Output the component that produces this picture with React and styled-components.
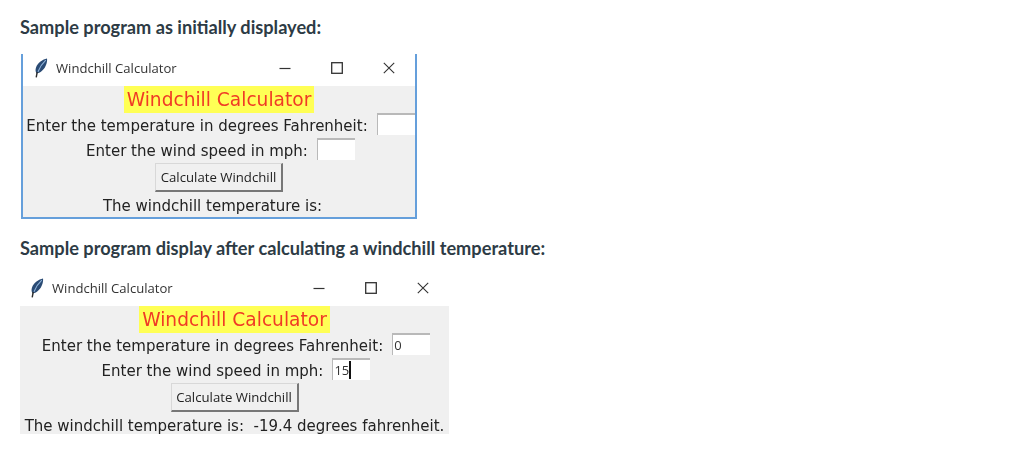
import React from "react"
import styled, { createGlobalStyle } from "styled-components"

const Global = createGlobalStyle`
  html, body {
    margin: 0;
    background: #fff;
  }
`

const Feather = () => (
  <svg width="14" height="20" viewBox="0 0 14 20">
    <path d="M13 0.5 C8.8 1.2 3.6 4.8 2 9.6 C1.2 12.2 1.5 14.2 2.8 15.6 C7 14.8 10.8 11 12.2 6.6 C13 4.4 13.3 2.2 13 0.5 Z" fill="#2a4b74" />
    <path d="M11.8 2.2 C8.8 5 5.8 9 4 13.8" stroke="#8fb3da" strokeWidth="1.1" fill="none" />
    <path d="M3.2 14 L2.2 19.4" stroke="#2b2b2b" strokeWidth="1.4" fill="none" />
  </svg>
)

const Controls = () => (
  <ControlGroup>
    <Control>
      <svg width="12" height="12" viewBox="0 0 12 12"><path d="M0.5 6.5 H11.5" stroke="#333" strokeWidth="1.2" /></svg>
    </Control>
    <Control>
      <svg width="12" height="12" viewBox="0 0 12 12"><rect x="0.7" y="0.7" width="10.6" height="10.6" fill="none" stroke="#333" strokeWidth="1.3" /></svg>
    </Control>
    <Control>
      <svg width="12" height="12" viewBox="0 0 12 12"><path d="M0.8 0.8 L11.2 11.2 M11.2 0.8 L0.8 11.2" stroke="#333" strokeWidth="1.1" /></svg>
    </Control>
  </ControlGroup>
)

const CalculatorWindow = ({ framed, temp, wind, caret, result }) => (
  <Frame $framed={framed}>
    <TitleBar $framed={framed}>
      <IconSlot $framed={framed}><Feather /></IconSlot>
      <TitleText>Windchill Calculator</TitleText>
      <Controls />
    </TitleBar>
    <Body $framed={framed}>
      <Banner>Windchill Calculator</Banner>
      <Row>
        <Label>Enter the temperature in degrees Fahrenheit:</Label>
        <Entry>{temp}</Entry>
      </Row>
      <WindRow>
        <Label>Enter the wind speed in mph:</Label>
        <Entry>{wind}{caret && <Caret />}</Entry>
      </WindRow>
      <CalcButton>Calculate Windchill</CalcButton>
      <Result $framed={framed}>{result}</Result>
    </Body>
  </Frame>
)

const App = () => (
  <>
    <Global />
    <Page>
      <FirstHeading>Sample program as initially displayed:</FirstHeading>
      <CalculatorWindow framed result="The windchill temperature is:" />
      <SecondHeading>Sample program display after calculating a windchill temperature:</SecondHeading>
      <CalculatorWindow
        temp="0"
        wind="15"
        caret
        result="The windchill temperature is:  -19.4 degrees fahrenheit."
      />
    </Page>
  </>
)

export default App

const Page = styled.div`
  width: 1024px;
  height: 468px;
  box-sizing: border-box;
  padding: 15px 0 0 20px;
  overflow: hidden;
`

const Heading = styled.h2`
  margin: 0;
  height: 24px;
  line-height: 24px;
  font-family: "Lato", sans-serif;
  font-size: 18.2px;
  font-weight: 700;
  color: #2d3b45;
  white-space: nowrap;
`

const FirstHeading = styled(Heading)`
  margin-bottom: 15px;
`

const SecondHeading = styled(Heading)`
  margin-top: 17px;
  margin-bottom: 10px;
`

const Frame = styled.div`
  box-sizing: border-box;
  width: ${props => props.$framed ? "396px" : "429px"};
  margin-left: ${props => props.$framed ? "1px" : "0"};
  background: #fff;
  border: ${props => props.$framed ? "2px solid #659fdb" : "none"};
  border-top: none;
  filter: blur(0.3px);
`

const TitleBar = styled.div`
  display: flex;
  align-items: center;
  box-sizing: border-box;
  height: ${props => props.$framed ? "32px" : "36px"};
  padding-bottom: ${props => props.$framed ? "4px" : "0"};
`

const IconSlot = styled.div`
  display: flex;
  margin-left: ${props => props.$framed ? "11px" : "10px"};
  margin-right: 8px;
`

const TitleText = styled.div`
  flex: 1;
  font-family: "Open Sans", sans-serif;
  font-size: 13.1px;
  color: #333;
  white-space: nowrap;
`

const ControlGroup = styled.div`
  display: flex;
`

const Control = styled.div`
  display: flex;
  align-items: center;
  justify-content: center;
  width: 52px;
`

const Body = styled.div`
  display: flex;
  flex-direction: column;
  align-items: center;
  background: #f0f0f0;
  height: ${props => props.$framed ? "131px" : "128px"};
  overflow: hidden;
  font-family: "DejaVu Sans", sans-serif;
  color: #222;
`

const Banner = styled.div`
  height: 28px;
  line-height: 27px;
  padding: 0 3px;
  background: #ffff55;
  color: #f03a26;
  font-size: 18.6px;
  white-space: nowrap;
`

const Row = styled.div`
  display: flex;
  align-items: center;
  gap: 9px;
  height: 22px;
  flex: none;
  margin-left: 3px;
`

const WindRow = styled(Row)`
  margin-top: 3px;
`

const Label = styled.div`
  padding-top: 3px;
  font-size: 15px;
  white-space: nowrap;
`

const Entry = styled.div`
  box-sizing: border-box;
  display: flex;
  align-items: center;
  width: 38px;
  height: 22px;
  padding-left: 1px;
  background: #fff;
  border-top: 2px solid #b9b9b9;
  border-left: 1px solid #b9b9b9;
  font-family: "Open Sans", sans-serif;
  font-size: 13px;
  color: #333;
`

const Caret = styled.span`
  width: 2px;
  height: 18px;
  background: #111;
`

const CalcButton = styled.button`
  box-sizing: border-box;
  width: 128px;
  height: 29px;
  margin-top: 3px;
  padding: 0;
  flex: none;
  background: #f0f0f0;
  border: 1px solid #d8d8d8;
  border-right: 2px solid #777;
  border-bottom: 2px solid #777;
  font-family: "Open Sans", sans-serif;
  font-size: 13.2px;
  color: #222;
`

const Result = styled.div`
  height: 26px;
  line-height: 29px;
  margin-right: ${props => props.$framed ? "13px" : "0"};
  font-size: 15px;
  white-space: pre;
`
